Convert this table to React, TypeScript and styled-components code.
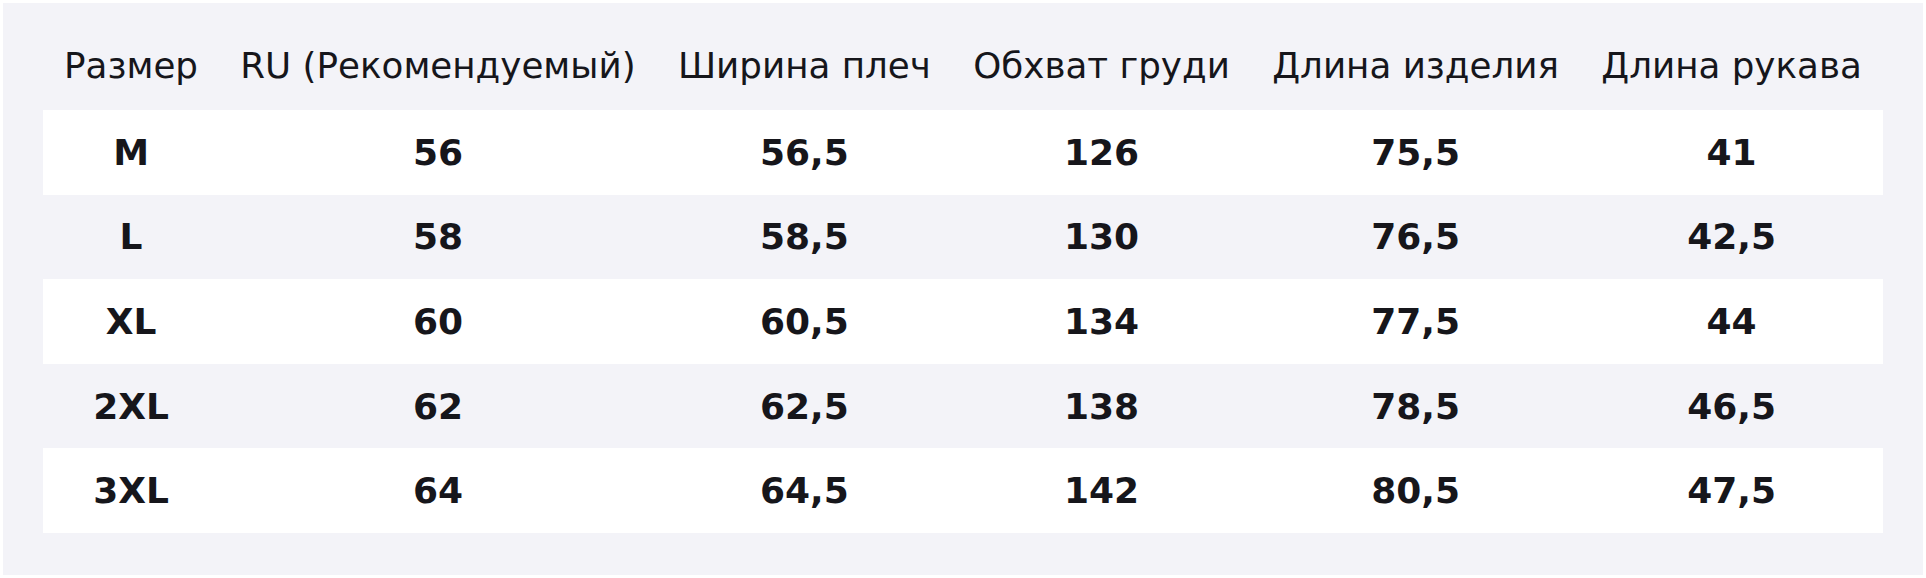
import React from "react";
import styled, { createGlobalStyle } from "styled-components";

const Global = createGlobalStyle`
  html, body { margin: 0; padding: 0; background: #ffffff; }
  body { font-family: "DejaVu Sans", "Noto Sans", sans-serif; }
`;

const Page = styled.div`
  padding: 3px;
`;

const Card = styled.div`
  background: #f3f3f8;
  padding: 40px 40px 42px;
`;

const Table = styled.table`
  width: 100%;
  border-collapse: collapse;
  border-spacing: 0;
  color: #16161b;
`;

const HeadCell = styled.th`
  font-family: "DejaVu Sans", sans-serif;
  font-weight: 400;
  font-size: 35.7px;
  line-height: 42px;
  white-space: nowrap;
  text-align: center;
  vertical-align: top;
  padding: 2px 21px 0;
  height: 67px;
  box-sizing: border-box;
`;

const Row = styled.tr<{ $striped: boolean }>`
  background: ${(p) => (p.$striped ? "#ffffff" : "transparent")};
`;

const Cell = styled.td`
  font-family: "DejaVu Sans", sans-serif;
  font-weight: 700;
  font-size: 36px;
  text-align: center;
  vertical-align: middle;
  height: 84.6px;
  padding: 0 21px;
  box-sizing: border-box;
  white-space: nowrap;
`;

const headers = [
  "Размер",
  "RU (Рекомендуемый)",
  "Ширина плеч",
  "Обхват груди",
  "Длина изделия",
  "Длина рукава",
];

const rows = [
  ["M", "56", "56,5", "126", "75,5", "41"],
  ["L", "58", "58,5", "130", "76,5", "42,5"],
  ["XL", "60", "60,5", "134", "77,5", "44"],
  ["2XL", "62", "62,5", "138", "78,5", "46,5"],
  ["3XL", "64", "64,5", "142", "80,5", "47,5"],
];

export default function App() {
  return (
    <>
      <Global />
      <Page>
        <Card>
          <Table>
            <thead>
              <tr>
                {headers.map((h) => (
                  <HeadCell key={h}>{h}</HeadCell>
                ))}
              </tr>
            </thead>
            <tbody>
              {rows.map((r, i) => (
                <Row key={r[0]} $striped={i % 2 === 0}>
                  {r.map((c, j) => (
                    <Cell key={j}>{c}</Cell>
                  ))}
                </Row>
              ))}
            </tbody>
          </Table>
        </Card>
      </Page>
    </>
  );
}
